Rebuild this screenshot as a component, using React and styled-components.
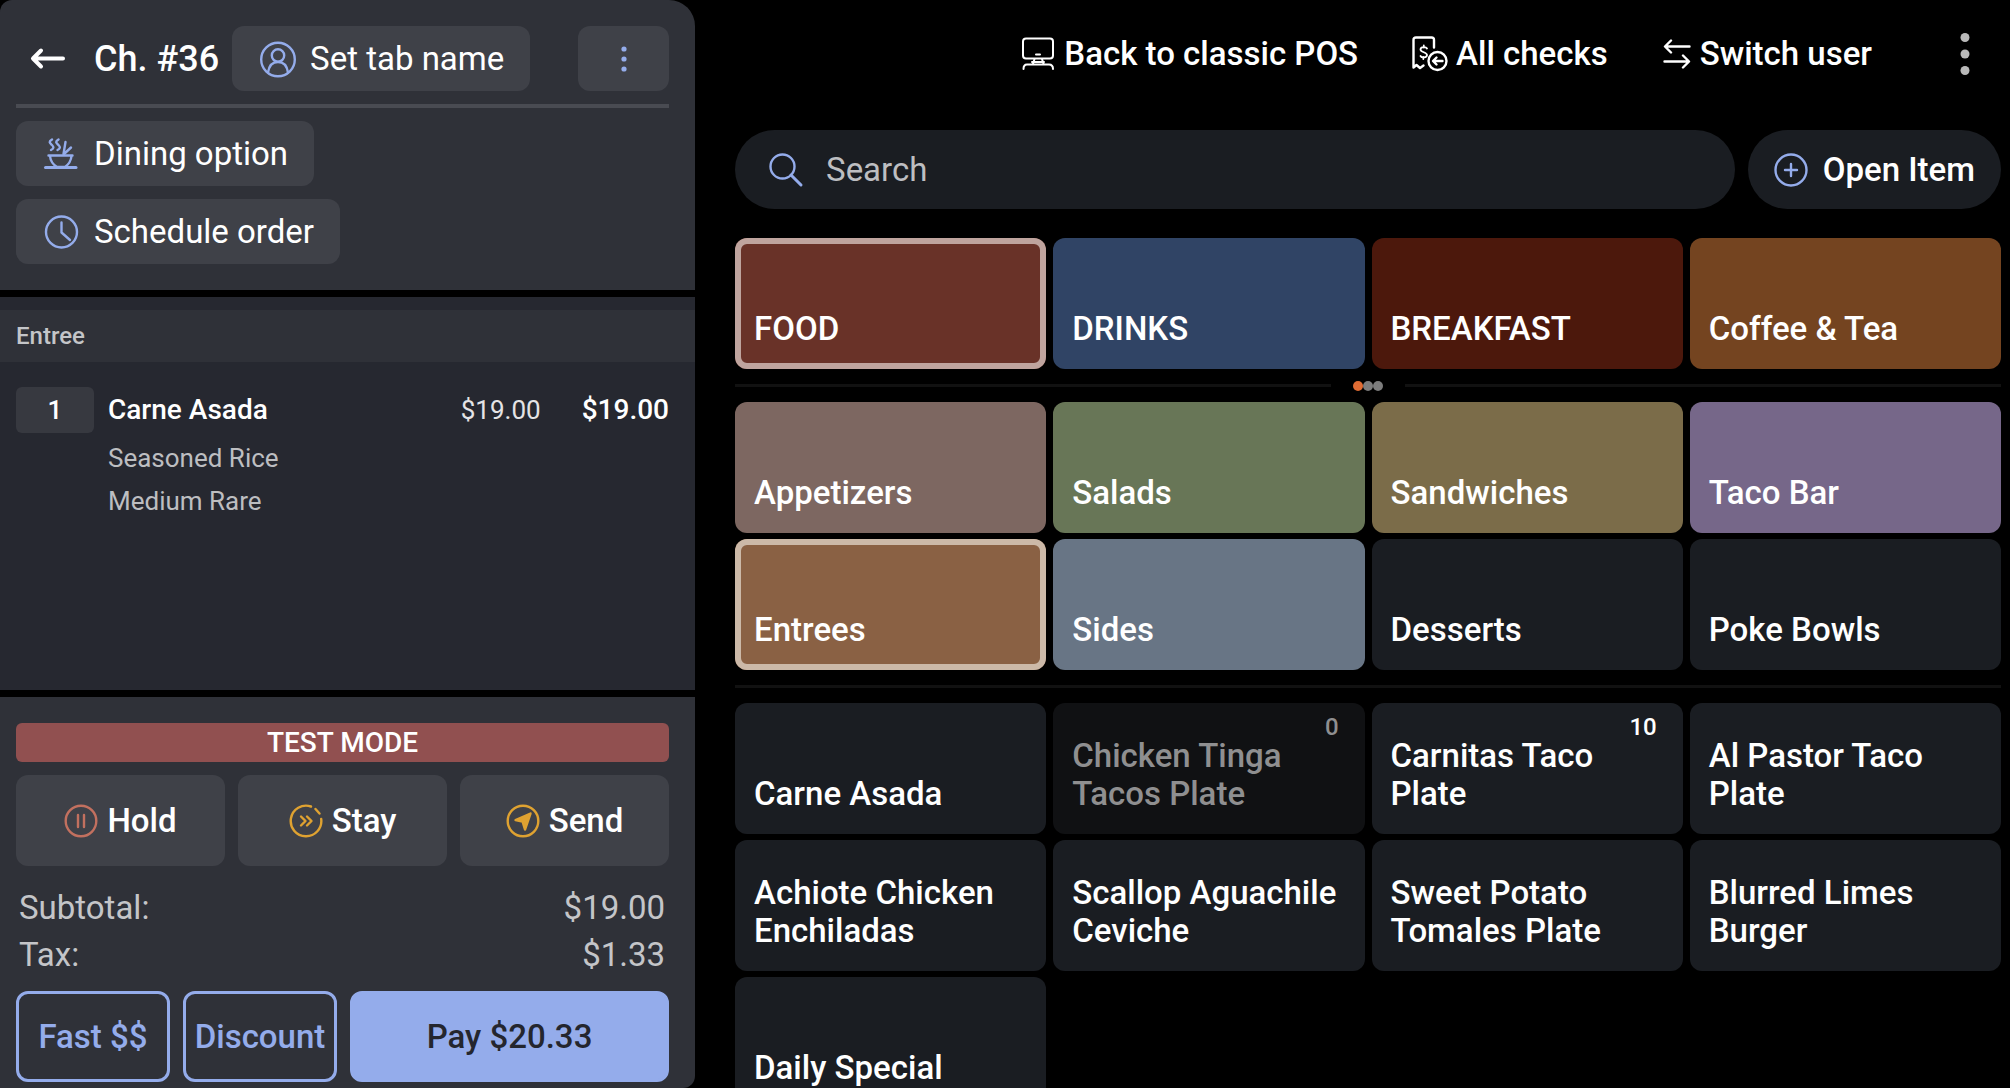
import React from "react";
import styled, { createGlobalStyle } from "styled-components";

const groups = [
  { name: "FOOD", color: "#693228", border: "#bfa49e" },
  { name: "DRINKS", color: "#304465" },
  { name: "BREAKFAST", color: "#4c180c" },
  { name: "Coffee & Tea", color: "#744420" },
];

const categories = [
  { name: "Appetizers", color: "#7d6761" },
  { name: "Salads", color: "#687657" },
  { name: "Sandwiches", color: "#7b6c49" },
  { name: "Taco Bar", color: "#766789" },
  { name: "Entrees", color: "#8a6144", border: "#ccb9a8" },
  { name: "Sides", color: "#687585" },
  { name: "Desserts" },
  { name: "Poke Bowls" },
];

const items = [
  { name: "Carne Asada" },
  { name: "Chicken Tinga Tacos Plate", count: 0 },
  { name: "Carnitas Taco Plate", count: 10 },
  { name: "Al Pastor Taco Plate" },
  { name: "Achiote Chicken Enchiladas" },
  { name: "Scallop Aguachile Ceviche" },
  { name: "Sweet Potato Tomales Plate" },
  { name: "Blurred Limes Burger" },
  { name: "Daily Special" },
];

const BackIcon = () => (
  <Icon $size={39} $color="#fff" $stroke={4} viewBox="0 0 39 39">
    <path d="M34 19.5H5M12 11.5l-8 8 8 8" />
  </Icon>
);

const UserIcon = () => (
  <Icon $size={39} viewBox="0 0 39 39">
    <circle cx="20" cy="19.5" r="16.8" />
    <circle cx="20" cy="15.5" r="6.2" />
    <path d="M10 32.5c1-6.5 4.5-10.5 10-10.5s9 4 10 10.5" />
  </Icon>
);

const DiningIcon = () => (
  <Icon $size={39} viewBox="0 0 39 39">
    <path d="M10 4.5c-4 2.5-2 3.5 0 5.5s2 3.5-1 5M16.5 4.5c-4 2.5-2 3.5 0 5.5s2 3.5-1 5" />
    <path d="M23.5 7l-2 12M29 12.5l-7 6.5" />
    <path d="M6.5 20.5h24M8 21c.5 5.5 3 8.5 7 11h8c3.5-2.5 6-5.5 6.5-11" />
    <path d="M3.5 32.5h30.5" strokeWidth="3" />
  </Icon>
);

const ClockIcon = () => (
  <Icon $size={39} viewBox="0 0 39 39">
    <circle cx="19.5" cy="19" r="15.5" />
    <path d="M19.5 9.5v10l8.5 7.5" />
  </Icon>
);

const HoldIcon = () => (
  <Icon $size={34} $color="#c2705f" viewBox="0 0 34 34">
    <circle cx="17" cy="17" r="15.3" />
    <path d="M14 11v12M20 11v12" />
  </Icon>
);

const StayIcon = () => (
  <Icon $size={34} $color="#dfa231" viewBox="0 0 34 34">
    <path d="M22 2.5A15.3 15.3 0 1 0 32.2 15M26.5 5l4 4.5" />
    <path d="M12 12.5l4.5 4.5-4.5 4.5M18 12.5l4.5 4.5-4.5 4.5" />
  </Icon>
);

const SendIcon = () => (
  <Icon $size={34} $color="#dfa231" viewBox="0 0 34 34">
    <circle cx="17" cy="17" r="15.3" />
    <path d="M24.5 9.5L9.5 16l7 1.5 2.5 8z" fill="currentColor" />
  </Icon>
);

const PosIcon = () => (
  <Icon $size={36} $color="#fff" $stroke={2} viewBox="0 0 36 36">
    <rect x="3" y="2.5" width="30" height="20" rx="3" />
    <path d="M16 18.5h4M14.5 23l-1.5 5M22 23l1.5 5M12 26h12" />
    <path d="M3.5 33c0-3 1-4.5 3.5-4.5h22c2.5 0 4 1.5 4 4.5" />
  </Icon>
);

const ChecksIcon = () => (
  <Icon $size={36} $color="#fff" viewBox="0 0 36 36">
    <path d="M22 11.5V4q0-2.5-2.5-2.5H4Q1.5 1.5 1.5 4v27.5l3-2.5 3.5 3 3.5-2.5" />
    <path
      d="M15 12.5c-1-2-6.5-2-6.5 1s6.500 2.5 6.5 5.5-5.5 3-6.5 1M11.8 9.5v2M11.3 21v2"
      strokeWidth="1.8"
    />
    <circle cx="25.5" cy="25" r="9" />
    <path d="M30.500 25h-9M24.5 21.5L21 25l3.500 3.5" />
  </Icon>
);

const SwitchIcon = () => (
  <Icon $size={30} $color="#fff" viewBox="0 0 30 30">
    <path d="M27.5 7.5h-24M9 1.5l-6 6 6 6M2.5 22.5h24M21 16.5l6 6-6 6" />
  </Icon>
);

const SearchIcon = () => (
  <Icon $size={36} viewBox="0 0 36 36">
    <circle cx="14.5" cy="14.5" r="12" />
    <path d="M23 23l10 10" strokeWidth="3" />
  </Icon>
);

const PlusIcon = () => (
  <Icon $size={34} viewBox="0 0 34 34">
    <circle cx="17" cy="17" r="15.5" />
    <path d="M17 11v12M11 17h12" />
  </Icon>
);

const App = () => {
  return (
    <Page>
      <GlobalStyle />
      <Check>
        <CheckTop>
          <CheckBar>
            <BackButton aria-label="Back">
              <BackIcon />
            </BackButton>
            <h1>Ch. #36</h1>
            <Chip>
              <UserIcon />
              Set tab name
            </Chip>
            <MoreButton aria-label="Check options">
              <Dots width="8" height="26" viewBox="0 0 8 26">
                <circle cx="4" cy="3" r="2.6" />
                <circle cx="4" cy="13" r="2.6" />
                <circle cx="4" cy="23" r="2.6" />
              </Dots>
            </MoreButton>
          </CheckBar>
          <CheckOptions>
            <Chip>
              <DiningIcon />
              Dining option
            </Chip>
            <Chip>
              <ClockIcon />
              Schedule order
            </Chip>
          </CheckOptions>
        </CheckTop>

        <Order>
          <h2>Entree</h2>
          <OrderLine>
            <Quantity>1</Quantity>
            <strong>Carne Asada</strong>
            <span>$19.00</span>
            <strong>$19.00</strong>
          </OrderLine>
          <Modifiers>
            <li>Seasoned Rice</li>
            <li>Medium Rare</li>
          </Modifiers>
        </Order>

        <CheckBottom>
          <TestMode>TEST MODE</TestMode>
          <Actions>
            <ActionButton>
              <HoldIcon />
              Hold
            </ActionButton>
            <ActionButton>
              <StayIcon />
              Stay
            </ActionButton>
            <ActionButton>
              <SendIcon />
              Send
            </ActionButton>
          </Actions>
          <Totals>
            <dt>Subtotal:</dt>
            <dd>$19.00</dd>
            <dt>Tax:</dt>
            <dd>$1.33</dd>
          </Totals>
          <Payment>
            <PayButton>Fast $$</PayButton>
            <PayButton>Discount</PayButton>
            <PayButton $primary>Pay $20.33</PayButton>
          </Payment>
        </CheckBottom>
      </Check>

      <Menu>
        <TopNav>
          <NavButton>
            <PosIcon />
            Back to classic POS
          </NavButton>
          <NavButton>
            <ChecksIcon />
            All checks
          </NavButton>
          <NavButton>
            <SwitchIcon />
            Switch user
          </NavButton>
          <NavMore aria-label="More">
            <Dots $color="#b9b9b9" width="10" height="44" viewBox="0 0 10 44">
              <circle cx="5" cy="5.5" r="4.5" />
              <circle cx="5" cy="22" r="4.5" />
              <circle cx="5" cy="38.5" r="4.5" />
            </Dots>
          </NavMore>
        </TopNav>

        <SearchRow>
          <SearchBox>
            <SearchIcon />
            <input type="text" placeholder="Search" aria-label="Search" />
          </SearchBox>
          <OpenItem>
            <PlusIcon />
            Open Item
          </OpenItem>
        </SearchRow>

        <Tiles>
          {groups.map((group) => (
            <Tile key={group.name} $color={group.color} $border={group.border}>
              {group.name}
            </Tile>
          ))}
        </Tiles>
        <Divider>
          <Line />
          <Pager>
            <Dot $active />
            <Dot />
            <Dot />
          </Pager>
          <Line />
        </Divider>
        <Tiles>
          {categories.map((category) => (
            <Tile
              key={category.name}
              $color={category.color}
              $border={category.border}
            >
              {category.name}
            </Tile>
          ))}
        </Tiles>
        <Divider>
          <Line />
        </Divider>
        <Tiles>
          {items.map((item) => (
            <Tile key={item.name} disabled={item.count === 0}>
              {item.name}
              {item.count !== undefined && <Count>{item.count}</Count>}
            </Tile>
          ))}
        </Tiles>
      </Menu>
    </Page>
  );
};

export default App;

const GlobalStyle = createGlobalStyle`
  * {
    box-sizing: border-box;
    margin: 0;
    padding: 0;
  }
  body {
    background: #000;
    color: #fff;
    font-family: Roboto, "Liberation Sans", sans-serif;
    font-size: 33px;
    line-height: 38px;
  }
  button,
  input {
    border: none;
    background: none;
    color: inherit;
    font: inherit;
  }
  ul {
    list-style: none;
  }
`;

const Page = styled.div`
  display: grid;
  grid-template-columns: minmax(0, 37fr) minmax(0, 70fr);
  grid-template-rows: minmax(0, 1fr);
  height: 100vh;
  overflow: hidden;
`;

const Icon = styled.svg`
  flex: none;
  width: ${({ $size }) => $size}px;
  height: ${({ $size }) => $size}px;
  color: ${({ $color = "#94aceb" }) => $color};
  fill: none;
  stroke: currentColor;
  stroke-width: ${({ $stroke = 2.4 }) => $stroke};
  stroke-linecap: round;
  stroke-linejoin: round;
`;

const Dots = styled.svg`
  fill: ${({ $color = "#94aceb" }) => $color};
`;

const Check = styled.aside`
  display: flex;
  flex-direction: column;
  gap: 7px;
`;

const CheckTop = styled.header`
  padding: 26px 26px 26px 16px;
  border-radius: 12px 26px 0 0;
  background: #2f3138;
`;

const CheckBar = styled.div`
  display: flex;
  align-items: center;
  gap: 13px;
  padding-bottom: 13px;
  border-bottom: 4px solid #494b52;
  h1 {
    font-size: 36px;
    font-weight: 500;
    white-space: nowrap;
  }
`;

const BackButton = styled.button`
  display: grid;
  place-items: center;
  width: 65px;
  height: 65px;
`;

const Chip = styled.button`
  display: flex;
  align-items: center;
  gap: 13px;
  height: 65px;
  padding: 1px 26px 0;
  border-radius: 12px;
  background: #3f4148;
  white-space: nowrap;
`;

const MoreButton = styled.button`
  display: grid;
  place-items: center;
  width: 91px;
  height: 65px;
  margin-left: auto;
  border-radius: 12px;
  background: #3f4148;
`;

const CheckOptions = styled.div`
  display: flex;
  flex-direction: column;
  align-items: flex-start;
  gap: 13px;
  padding-top: 13px;
`;

const Order = styled.section`
  flex: 1;
  padding-top: 13px;
  background: #262830;
  font-size: 26px;
  h2 {
    padding: 0 16px;
    background: #2f3138;
    color: #c4c5c8;
    font-size: 24px;
    font-weight: 500;
    line-height: 52px;
  }
`;

const OrderLine = styled.div`
  display: flex;
  align-items: center;
  padding: 25px 26px 0 16px;
  strong {
    font-size: 28px;
    font-weight: 500;
  }
  span {
    margin-left: auto;
    padding-right: 41px;
    color: #e4e4e6;
  }
`;

const Quantity = styled.div`
  width: 78px;
  margin-right: 14px;
  border-radius: 6px;
  background: #373940;
  font-weight: 500;
  line-height: 46px;
  text-align: center;
`;

const Modifiers = styled.ul`
  padding: 4px 26px 0 108px;
  color: #bdbec1;
  line-height: 43px;
`;

const CheckBottom = styled.footer`
  padding: 26px 26px 6px 16px;
  border-radius: 0 0 12px 0;
  background: #2f3138;
`;

const TestMode = styled.div`
  border-radius: 6px;
  background: #915050;
  font-size: 28px;
  font-weight: 500;
  line-height: 39px;
  text-align: center;
`;

const Actions = styled.div`
  display: grid;
  grid-template-columns: repeat(3, 1fr);
  gap: 13px;
  margin: 13px 0 18px;
`;

const ActionButton = styled.button`
  display: flex;
  justify-content: center;
  align-items: center;
  gap: 9px;
  height: 91px;
  padding-top: 1px;
  border-radius: 12px;
  background: #3f4148;
  font-weight: 500;
`;

const Totals = styled.dl`
  display: grid;
  grid-template-columns: 1fr auto;
  padding: 0 4px 0 3px;
  color: #c4c5c8;
  line-height: 47px;
  dd {
    text-align: right;
  }
`;

const Payment = styled.div`
  display: grid;
  grid-template-columns: 154px 154px 1fr;
  gap: 13px;
  margin-top: 13px;
`;

const PayButton = styled.button`
  height: 91px;
  padding-top: 1px;
  border: 3px solid #94aceb;
  border-radius: 12px;
  background: ${({ $primary }) => ($primary ? "#94aceb" : "none")};
  color: ${({ $primary }) => ($primary ? "#24262e" : "#94aceb")};
  font-weight: 500;
  white-space: nowrap;
`;

const Menu = styled.main`
  min-width: 0;
  padding: 0 9px 0 40px;
`;

const TopNav = styled.nav`
  display: flex;
  justify-content: flex-end;
  align-items: center;
  gap: 54px;
  height: 130px;
  padding: 0 31px 23px 0;
`;

const NavButton = styled.button`
  display: flex;
  align-items: center;
  gap: 8px;
  font-weight: 500;
  white-space: nowrap;
`;

const NavMore = styled.button`
  display: flex;
  margin-left: 34px;
`;

const SearchRow = styled.div`
  display: flex;
  gap: 13px;
  margin-bottom: 29px;
`;

const SearchBox = styled.label`
  display: flex;
  flex: 1;
  align-items: center;
  gap: 22px;
  height: 79px;
  padding: 1px 33px 0;
  border-radius: 40px;
  background: #1a1d22;
  input {
    flex: 1;
    min-width: 0;
    outline: none;
  }
  input::placeholder {
    color: #bdbec1;
    opacity: 1;
  }
`;

const OpenItem = styled.button`
  display: flex;
  align-items: center;
  gap: 15px;
  padding: 1px 26px 0;
  border-radius: 40px;
  background: #1a1d22;
  font-weight: 500;
  white-space: nowrap;
`;

const Tiles = styled.div`
  display: grid;
  grid-template-columns: repeat(4, minmax(0, 1fr));
  gap: 6px 7px;
`;

const Tile = styled.button`
  position: relative;
  display: flex;
  align-items: flex-end;
  height: 131px;
  padding: 0 19px 21px;
  border-radius: 12px;
  background: ${({ $color = "#1a1d22" }) => $color};
  box-shadow: ${({ $border }) =>
    $border ? `inset 0 0 0 6px ${$border}` : "none"};
  font-weight: 500;
  text-align: left;
  &:disabled {
    background: #101113;
    color: #8f8f90;
  }
`;

const Count = styled.span`
  position: absolute;
  top: 8px;
  right: 26px;
  font-size: 24px;
  line-height: 32px;
`;

const Divider = styled.div`
  display: flex;
  align-items: center;
  height: 3px;
  margin: 15px 0;
`;

const Line = styled.div`
  flex: 1;
  height: 3px;
  background: #111;
`;

const Pager = styled.div`
  display: flex;
  padding: 0 22px;
`;

const Dot = styled.span`
  width: 10px;
  height: 10px;
  border-radius: 50%;
  background: ${({ $active }) => ($active ? "#e06c34" : "#7d7d7d")};
`;
